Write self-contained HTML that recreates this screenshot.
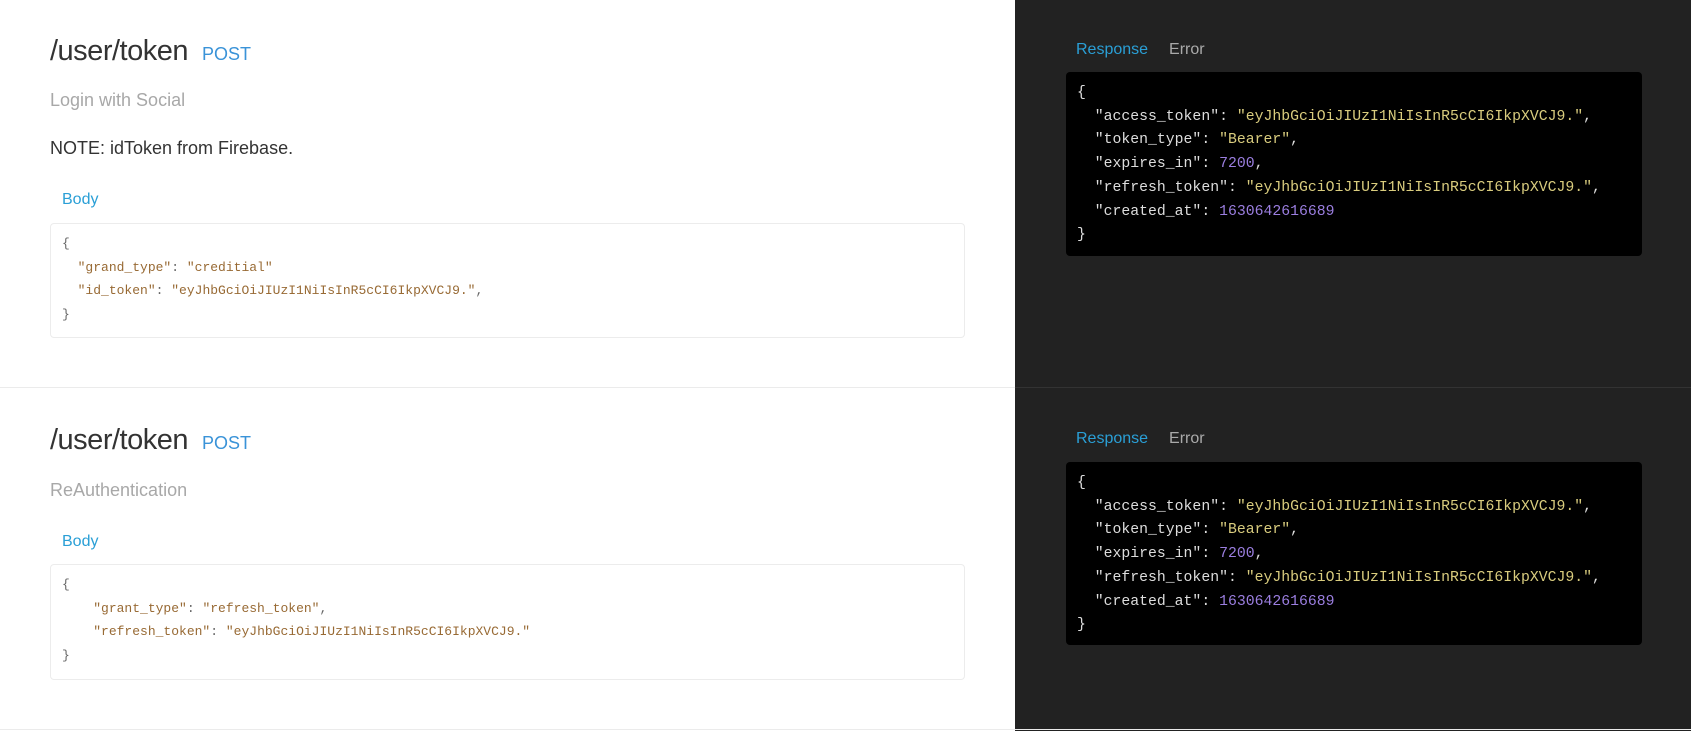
<!DOCTYPE html>
<html><head><meta charset="utf-8"><style>
*{margin:0;padding:0;box-sizing:border-box}
body{width:1691px;height:731px;overflow:hidden;background:#fff;font-family:"Liberation Sans",sans-serif;position:relative}
.dark{position:absolute;left:1015px;top:0;width:676px;height:731px;background:#222}
.hl{position:absolute;left:0;width:1691px;height:1px;background:#ebebeb}
.hd{position:absolute;left:1015px;width:676px;height:1px;background:#333}
.abs{position:absolute;white-space:nowrap}
.title{font-size:29px;color:#333;letter-spacing:-0.5px}
.title span{font-size:18px;color:#3a93d8;margin-left:14px;letter-spacing:0}
.sub{font-size:18px;color:#a8a8a8}
.note{font-size:18px;color:#333}
.tab{font-size:16px;color:#2a9fd6}
.lbox{position:absolute;left:50px;width:915px;border:1px solid #ececec;border-radius:4px;background:#fff;padding:8px 0 0 11px}
pre{font-family:"Liberation Mono",monospace;line-height:23.7px}
.lbox pre{color:#666;font-size:13px}
.k{color:#986a34}.s{color:#986a34}
.dbox{position:absolute;left:1066px;width:576px;background:#000;border-radius:4px;padding:10px 0 0 11px}
.dbox pre{color:#ddd;font-size:14.8px}
.ds{color:#d9cc7e}.dn{color:#9b7ee0}
.tabs{font-size:16px}
.tabs .a{color:#2a9fd6;margin-right:21px}.tabs .e{color:#aaa}
</style></head><body>
<div class="dark"></div>
<div class="hl" style="top:387px"></div>
<div class="hd" style="top:387px"></div>
<div class="hl" style="top:729px"></div>

<div class="abs title" style="left:50px;top:35px">/user/token<span>POST</span></div>
<div class="abs sub" style="left:50px;top:90px">Login with Social</div>
<div class="abs note" style="left:50px;top:138px">NOTE: idToken from Firebase.</div>
<div class="abs tab" style="left:62px;top:191px">Body</div>
<div class="lbox" style="top:223px;height:115px"><pre>{
  <span class="k">"grand_type"</span>: <span class="s">"creditial"</span>
  <span class="k">"id_token"</span>: <span class="s">"eyJhbGciOiJIUzI1NiIsInR5cCI6IkpXVCJ9."</span>,
}</pre></div>

<div class="abs title" style="left:50px;top:424px">/user/token<span>POST</span></div>
<div class="abs sub" style="left:50px;top:480px">ReAuthentication</div>
<div class="abs tab" style="left:62px;top:533px">Body</div>
<div class="lbox" style="top:564px;height:116px"><pre>{
    <span class="k">"grant_type"</span>: <span class="s">"refresh_token"</span>,
    <span class="k">"refresh_token"</span>: <span class="s">"eyJhbGciOiJIUzI1NiIsInR5cCI6IkpXVCJ9."</span>
}</pre></div>

<div class="abs tabs" style="left:1076px;top:41px"><span class="a">Response</span><span class="e">Error</span></div>
<div class="dbox" style="top:72px;height:184px"><pre>{
  "access_token": <span class="ds">"eyJhbGciOiJIUzI1NiIsInR5cCI6IkpXVCJ9."</span>,
  "token_type": <span class="ds">"Bearer"</span>,
  "expires_in": <span class="dn">7200</span>,
  "refresh_token": <span class="ds">"eyJhbGciOiJIUzI1NiIsInR5cCI6IkpXVCJ9."</span>,
  "created_at": <span class="dn">1630642616689</span>
}</pre></div>

<div class="abs tabs" style="left:1076px;top:430px"><span class="a">Response</span><span class="e">Error</span></div>
<div class="dbox" style="top:462px;height:183px"><pre>{
  "access_token": <span class="ds">"eyJhbGciOiJIUzI1NiIsInR5cCI6IkpXVCJ9."</span>,
  "token_type": <span class="ds">"Bearer"</span>,
  "expires_in": <span class="dn">7200</span>,
  "refresh_token": <span class="ds">"eyJhbGciOiJIUzI1NiIsInR5cCI6IkpXVCJ9."</span>,
  "created_at": <span class="dn">1630642616689</span>
}</pre></div>
</body></html>
